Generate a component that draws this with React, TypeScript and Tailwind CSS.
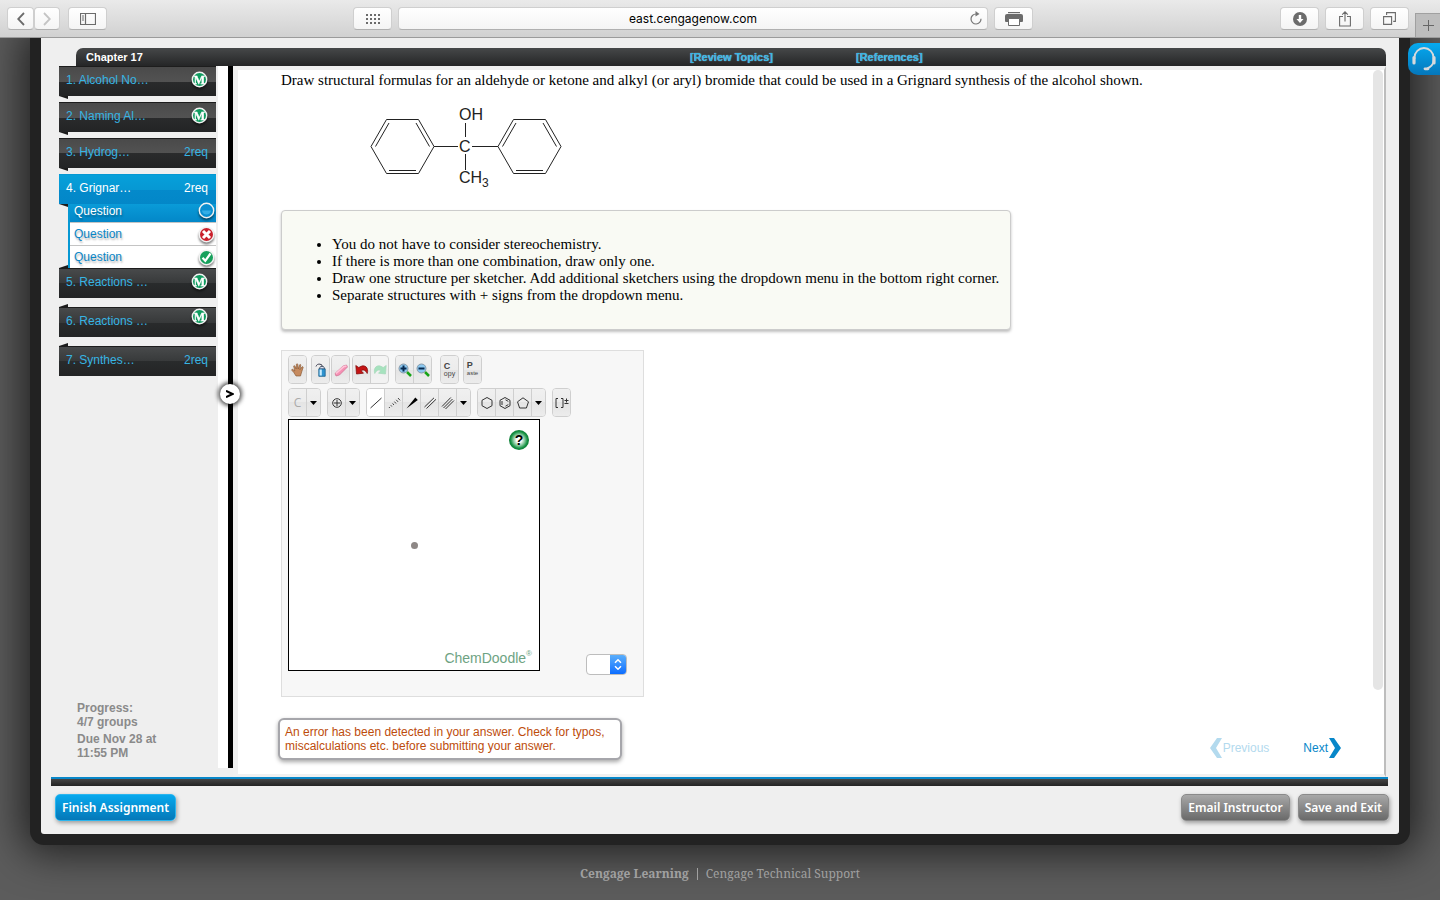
import React from 'react';
import { ChevronLeft, ChevronRight } from 'lucide-react';

type Status = 'mastered' | 'open' | 'wrong' | 'right';

const chromeButton =
    'flex h-[23px] items-center justify-center rounded-[4px] border border-[#cfcfcf] border-b-[#b0b0b0] bg-gradient-to-b from-white to-[#f4f4f4] text-[#6b6b6b]';

const BrowserBar: React.FC = () => {
    return (
        <header className="grid h-[38px] shrink-0 grid-cols-[353fr_680fr_407fr] items-center border-b border-[#9b9b9b] bg-gradient-to-b from-[#eaeaea] to-[#d1d1d1]">
            <div className="flex pl-[7px]">
                <button aria-label="Back" className={`${chromeButton} w-[27px]`}>
                    <svg width="8" height="14" viewBox="0 0 8 14" fill="none" stroke="currentColor" strokeWidth="1.800">
                        <path d="M7 1 1.200 7 7 13" />
                    </svg>
                </button>
                <button aria-label="Forward" className={`${chromeButton} w-[26px]`}>
                    <svg width="8" height="14" viewBox="0 0 8 14" fill="none" stroke="#c4c4c4" strokeWidth="1.800">
                        <path d="m1 1 5.800 6L1 13" />
                    </svg>
                </button>
                <button aria-label="Show sidebar" className={`${chromeButton} ml-2 w-[39px]`}>
                    <svg width="16" height="12" viewBox="0 0 16 12" fill="none" stroke="currentColor">
                        <path d="M.5.5h15v11H.5zM5.5.5v11" strokeWidth="1.2" />
                        <path d="M2 3h2M2 5h2M2 7h2" />
                    </svg>
                </button>
            </div>
            <div className="flex gap-[6px]">
                <button aria-label="Top sites" className={`${chromeButton} w-[39px] shrink-0`}>
                    <svg width="14" height="10" viewBox="0 0 14 10" fill="currentColor">
                        {[0, 4, 8].map((y) =>
                            [0, 4, 8, 12].map((x) => <rect key={`${x}-${y}`} x={x} y={y} width="2" height="2" />)
                        )}
                    </svg>
                </button>
                <div className={`${chromeButton} relative flex-1`}>
                    <input
                        aria-label="Address"
                        defaultValue="east.cengagenow.com"
                        className="w-full bg-transparent text-center font-['Inter',sans-serif] text-[12px] text-black outline-none"
                    />
                    <button aria-label="Reload" className="absolute right-[5px] top-[3px]">
                        <svg width="13" height="14" viewBox="0 0 13 14" fill="none" stroke="#777" strokeWidth="1.2">
                            <path d="M7 3a5 5 0 1 0 5 4.8" />
                            <path d="M6.5 0v5.6L10.5 3z" fill="#777" stroke="none" />
                        </svg>
                    </button>
                </div>
                <button aria-label="Print" className={`${chromeButton} w-[39px] shrink-0`}>
                    <svg width="18" height="14" viewBox="0 0 18 14">
                        <path d="M3 .6h12" stroke="currentColor" strokeWidth="1.2" />
                        <path d="M2 2h14a2 2 0 0 1 2 2v5a1 1 0 0 1-1 1H1a1 1 0 0 1-1-1V4a2 2 0 0 1 2-2z" fill="currentColor" />
                        <path d="M3.5 6.5h11v7h-11z" fill="#fff" stroke="currentColor" />
                    </svg>
                </button>
            </div>
            <div className="flex items-center justify-end gap-[6px] self-stretch">
                <button aria-label="Downloads" className={`${chromeButton} w-[39px]`}>
                    <svg width="14" height="14" viewBox="0 0 14 14">
                        <circle cx="7" cy="7" r="7" fill="currentColor" />
                        <path d="M5.8 3h2.4v4h2.3L7 11 3.500 7h2.300z" fill="#fff" />
                    </svg>
                </button>
                <button aria-label="Share" className={`${chromeButton} w-[39px]`}>
                    <svg width="12" height="16" viewBox="0 0 12 16" fill="none" stroke="currentColor" strokeWidth="1.1">
                        <path d="M4 5.500H.6v9.500h10.800V5.500H8M6 10.500V1M3.200 3.600 6 .8l2.800 2.800" />
                    </svg>
                </button>
                <button aria-label="Show all tabs" className={`${chromeButton} w-[39px]`}>
                    <svg width="13" height="13" viewBox="0 0 13 13" fill="none" stroke="currentColor" strokeWidth="1.1">
                        <path d="M.6 4.600h8v7.800h-8zM3.600 3V.6h8.800v8.800H10.200" />
                    </svg>
                </button>
                <button aria-label="New tab" className="flex h-[24px] w-[25px] items-center justify-center self-end border-l border-t border-[#a0a0a0] bg-[#bdbdbd]">
                    <svg width="11" height="11" viewBox="0 0 11 11" stroke="#666" strokeWidth="1">
                        <path d="M5.500 0v11M0 5.500h11" />
                    </svg>
                </button>
            </div>
        </header>
    );
};

const StatusBadge: React.FC<{ status: Status }> = ({ status }) => {
    const fill = { mastered: '#0f9b5f', open: '#0a8fd0', wrong: '#c9202c', right: '#17a05c' }[status];
    return (
        <svg width="17" height="17" viewBox="0 0 17 17" className="drop-shadow-[0_2px_1px_rgba(0,0,0,0.5)]">
            <circle cx="8.500" cy="8.500" r="7.200" fill={fill} stroke="#f2f2f2" strokeWidth="1.400" />
            {status === 'mastered' && (
                <text x="8.500" y="12.500" textAnchor="middle" fontSize="12" fontWeight="bold" fontFamily="Liberation Serif, serif" fill="#fff" stroke="#fff" strokeWidth=".3">
                    M
                </text>
            )}
            {status === 'open' && <path d="M4 8.500h9a4.500 4 0 0 1-9 0z" fill="#35aee6" />}
            {status === 'wrong' && <path d="m5 5 7 7M12 5l-7 7" stroke="#fff" strokeWidth="3" />}
            {status === 'right' && <path d="m4.500 8.800 2.800 3 5.200-7.300" fill="none" stroke="#fff" strokeWidth="2.200" />}
        </svg>
    );
};

const chapters = [
    { title: '1. Alcohol No…', mastered: true },
    { title: '2. Naming Al…', mastered: true },
    { title: '3. Hydrog…', mastered: false },
    { title: '4. Grignar…', mastered: false },
    { title: '5. Reactions …', mastered: true },
    { title: '6. Reactions …', mastered: true },
    { title: '7. Synthes…', mastered: false },
];

const questions: Status[] = ['open', 'wrong', 'right'];
const ACTIVE = 3;

const Sidebar: React.FC = () => {
    return (
        <aside className="flex w-[159px] shrink-0 flex-col justify-between pr-[2px] text-[12px]">
            <ul>
                {chapters.map((c, i) => (
                    <li key={c.title} className={i < ACTIVE ? 'mb-[6px]' : i > ACTIVE + 1 ? 'mt-[9px]' : ''}>
                        <div className="relative">
                            <button
                                className={`flex h-[30px] w-full items-center justify-between border-t pb-[4px] pl-[7px] pr-[8px] leading-[14px] ${
                                    i === ACTIVE
                                        ? 'border-[#0698d3] bg-[linear-gradient(#06a0da,#0698d3_50%,#048acb_50%,#0387c8)] text-white'
                                        : i < ACTIVE
                                          ? 'border-[#1d1d1d] bg-[linear-gradient(#4a4a4a,#525252_50%,#2a2b2c_50%,#232425)] text-[#37b5e4]'
                                          : 'border-[#1d1d1d] bg-[linear-gradient(#484a4b,#37393a_50%,#292b2c_50%,#232425)] text-[#37b5e4]'
                                }`}
                            >
                                <span>{c.title}</span>
                                {c.mastered ? (
                                    <span className={i === 5 ? 'self-start' : ''}>
                                        <StatusBadge status="mastered" />
                                    </span>
                                ) : (
                                    <span>2req</span>
                                )}
                            </button>
                            {i <= ACTIVE ? (
                                <span className="absolute left-0 top-full h-[3px] w-[9px] bg-[#1c1c1c] [clip-path:polygon(0_0,100%_0,100%_100%)]" />
                            ) : (
                                <span className="absolute bottom-full left-0 h-[3px] w-[9px] bg-[#1c1c1c] [clip-path:polygon(0_100%,100%_0,100%_100%)]" />
                            )}
                        </div>
                        {i === ACTIVE && (
                            <ul className="ml-[9px] border-l-2 border-[#0698d3] bg-white">
                                {questions.map((q) => (
                                    <li key={q} className="border-b border-[#c4c4c4] last:border-b-0">
                                        <button
                                            className={`flex w-full items-center justify-between pl-1 pr-px [text-shadow:1px_2px_2px_rgba(0,0,0,0.3)] ${
                                                q === 'open'
                                                    ? 'h-[18px] bg-gradient-to-b from-[#0a9bd8] to-[#0387c8] pb-[5px] text-white'
                                                    : 'h-[22px] text-[#0a86c6]'
                                            }`}
                                        >
                                            <span>Question</span>
                                            <StatusBadge status={q} />
                                        </button>
                                    </li>
                                ))}
                            </ul>
                        )}
                    </li>
                ))}
            </ul>
            <div className="mb-[17px] ml-[18px] w-[110px] space-y-[3px] font-bold leading-[14px] text-[#8a8a8a]">
                <p>
                    Progress:
                    <br />
                    4/7 groups
                </p>
                <p>
                    Due Nov 28 at
                    <br />
                    11:55 PM
                </p>
            </div>
        </aside>
    );
};

const Molecule: React.FC = () => {
    return (
        <svg width="193" height="85" viewBox="370 105 193 85" className="ml-[89px] mt-4 block" role="img" aria-label="1,1-diphenylethanol">
            <g fill="none" stroke="#222" strokeWidth="1">
                <path d="M371 146.500 386.500 119.500h32L434 146.500 418.500 173.500h-32z" />
                <path d="M375.500 146.500 389 123M416 123 429.500 146.500M389 170.500h27" />
                <path d="M498 146.500 513.500 119.500h32L561 146.500 545.500 173.500h-32z" />
                <path d="M502.500 146.500 516 123M543 123 556.500 146.500M516 170.500h27" />
                <path d="M434 146.500h24M472 146.500h26M465.500 123v14M465.500 154v16" />
            </g>
            <g fontFamily="Liberation Sans, sans-serif" fontSize="16" fill="#222">
                <text x="459" y="120">OH</text>
                <text x="459" y="152">C</text>
                <text x="459" y="183">CH</text>
                <text x="482" y="187" fontSize="12">3</text>
            </g>
        </svg>
    );
};

const ToolGroup: React.FC<{ className?: string; children: React.ReactNode }> = ({ className = '', children }) => (
    <div className={`flex h-[29px] divide-x divide-[#cfcfcf] overflow-hidden rounded-[4px] border border-[#cfcfcf] ${className}`}>{children}</div>
);

const Tool: React.FC<{ label: string; arrow?: boolean; selected?: boolean; faded?: boolean; children?: React.ReactNode }> = ({
    label,
    arrow,
    selected,
    faded,
    children,
}) => (
    <button
        aria-label={label}
        disabled={faded}
        className={`box-content flex items-center justify-center ${arrow ? 'w-[13px]' : 'w-[17px]'} ${
            selected ? 'bg-white' : 'bg-[linear-gradient(#f0f0f0,#ececec_50%,#e4e4e4_50%,#ececec)]'
        } ${faded ? 'opacity-40' : ''}`}
    >
        {arrow ? (
            <svg width="7" height="4" viewBox="0 0 7 4">
                <path d="M0 0h7L3.500 4z" fill="#000" />
            </svg>
        ) : (
            children
        )}
    </button>
);

const Glyph: React.FC<{ children: React.ReactNode }> = ({ children }) => (
    <svg width="14" height="14" viewBox="0 0 14 14" className="shrink-0" fill="none" stroke="#333" strokeWidth="1">
        {children}
    </svg>
);

const Magnifier: React.FC<{ plus?: boolean }> = ({ plus }) => (
    <Glyph>
        <path d="m9 9 4 4" stroke="#17a317" strokeWidth="2.500" />
        <circle cx="5.500" cy="5.500" r="4.500" fill="#8cc8f0" stroke="#8a9aa8" />
        <path d={plus ? 'M2.500 5.500h6M5.500 2.500v6' : 'M2.500 5.500h6'} stroke="#06294f" strokeWidth="2" />
    </Glyph>
);

const Sketcher: React.FC = () => {
    return (
        <section className="mt-5 w-[363px] border border-[#dedede] bg-[#f7f7f7] px-[6px] pb-[25px] pt-1">
            <div className="flex">
                <ToolGroup>
                    <Tool label="Move">
                        <Glyph>
                            <path
                                d="M5 13 2.800 9.500.8 7.200c-.4-.8.600-1.200 1.200-.6L3.800 8 2.700 3.500c-.2-1 1-1.200 1.300-.3L5.200 6 5.400 1.500c.1-1 1.300-1 1.400 0L7.200 6l1.300-4c.3-.9 1.500-.6 1.300.4L9 6.700l1.900-2.700c.6-.8 1.600-.1 1.200.7L10.800 8.500 9.500 13z"
                                fill="#c68a5e"
                                stroke="#80502e"
                                strokeWidth=".6"
                            />
                        </Glyph>
                    </Tool>
                </ToolGroup>
                <ToolGroup className="ml-1">
                    <Tool label="Clear">
                        <Glyph>
                            <path d="M2 3.500C2.500 1.500 4.500 .8 6 1.200L8 2v1.500" stroke="#445" />
                            <path d="M6.500 3.500h3l1.500 2.500H5z" fill="#dde" stroke="#345" strokeWidth=".8" />
                            <path d="M4.800 6h6.400v7.300H4.800z" fill="#2f93cf" stroke="#1b5f8d" strokeWidth=".8" />
                            <path d="M5.600 6.600h2.200v6H5.600z" fill="#c9ecff" stroke="none" />
                        </Glyph>
                    </Tool>
                </ToolGroup>
                <ToolGroup className="ml-px">
                    <Tool label="Erase">
                        <Glyph>
                            <path d="M1 10.500 9 3l3.500-1 1 2-8 8L2 13z" fill="#f590b4" stroke="#c96488" strokeWidth=".6" />
                            <path d="M2 10.500 9.500 3.800l3-.8" stroke="#ffc4d8" strokeWidth="1.600" />
                        </Glyph>
                    </Tool>
                </ToolGroup>
                <ToolGroup className="ml-[2px]">
                    <Tool label="Undo">
                        <Glyph>
                            <path d="m.8 2.500.7 8.500 7-.8-2.300-2.400c2-1.800 4.500-.3 6 2.700C14 5 10 .2 3.800 4.500z" fill="#c41414" stroke="#7c0909" strokeWidth=".7" />
                        </Glyph>
                    </Tool>
                    <Tool label="Redo" faded>
                        <Glyph>
                            <path d="m13.200 2.500-.7 8.500-7-.8 2.300-2.400c-2-1.800-4.500-.3-6 2.700C0 5 4 .2 10.200 4.500z" fill="#2fc46a" stroke="#2da85e" strokeWidth=".7" />
                        </Glyph>
                    </Tool>
                </ToolGroup>
                <ToolGroup className="ml-[6px]">
                    <Tool label="Zoom in">
                        <Magnifier plus />
                    </Tool>
                    <Tool label="Zoom out">
                        <Magnifier />
                    </Tool>
                </ToolGroup>
                <ToolGroup className="ml-2">
                    <Tool label="Copy">
                        <span className="text-left text-[9px] leading-[7px] text-[#444]">
                            <b>C</b>
                            <br />
                            <span className="text-[7px]">opy</span>
                        </span>
                    </Tool>
                </ToolGroup>
                <ToolGroup className="ml-1">
                    <Tool label="Paste">
                        <span className="text-left text-[9px] leading-[7px] text-[#444]">
                            <b>P</b>
                            <br />
                            <span className="text-[6px]">aste</span>
                        </span>
                    </Tool>
                </ToolGroup>
            </div>
            <div className="mt-1 flex gap-[6px]">
                <ToolGroup>
                    <Tool label="Carbon">
                        <span className="font-['Open_Sans',sans-serif] text-[12px] text-[#aaa]">C</span>
                    </Tool>
                    <Tool label="More elements" arrow />
                </ToolGroup>
                <ToolGroup>
                    <Tool label="Increase charge">
                        <Glyph>
                            <circle cx="7" cy="7" r="4.300" />
                            <path d="M4 7h6M7 4v6" />
                        </Glyph>
                    </Tool>
                    <Tool label="More charges" arrow />
                </ToolGroup>
                <ToolGroup>
                    <Tool label="Single bond" selected>
                        <Glyph>
                            <path d="M1.500 12 12.500 2" />
                        </Glyph>
                    </Tool>
                    <Tool label="Recessed bond">
                        <Glyph>
                            <path d="m2 11 .8 1M3.800 9.200l1 1.300M5.600 7.400l1.300 1.600M7.400 5.600l1.600 1.900M9.200 3.800l1.900 2.100M11 2l2 2.300" strokeWidth=".9" />
                        </Glyph>
                    </Tool>
                    <Tool label="Protruding bond">
                        <Glyph>
                            <path d="M1.500 12.500 10.300 1.500l2.500 2.500z" fill="#000" stroke="none" />
                        </Glyph>
                    </Tool>
                    <Tool label="Double bond">
                        <Glyph>
                            <path d="M1.500 11 11 1.800M3.500 12.500 13 3.300" />
                        </Glyph>
                    </Tool>
                    <Tool label="Triple bond">
                        <Glyph>
                            <path d="M1 10.500 9.800 1.500M2.500 12 11.500 3M4.500 13 13 4.500" />
                        </Glyph>
                    </Tool>
                    <Tool label="More bonds" arrow />
                </ToolGroup>
                <ToolGroup>
                    <Tool label="Cyclohexane ring">
                        <Glyph>
                            <path d="M7 1.500 12 4.300v5.400L7 12.500 2 9.700V4.300z" />
                        </Glyph>
                    </Tool>
                    <Tool label="Benzene ring">
                        <Glyph>
                            <path d="M7 1.500 12 4.300v5.400L7 12.500 2 9.700V4.300zM4 5v4M7.500 3.800l2.800 1.600M7.500 10.200l2.800-1.600" />
                        </Glyph>
                    </Tool>
                    <Tool label="Cyclopentane ring">
                        <Glyph>
                            <path d="m7 1.800 5.500 4-2.100 6.200H3.600L1.500 5.800z" />
                        </Glyph>
                    </Tool>
                    <Tool label="More rings" arrow />
                </ToolGroup>
                <ToolGroup>
                    <Tool label="Brackets">
                        <Glyph>
                            <path d="M3 2.500H1v9h2M6 2.500h2v9H6M9.500 4.500h4M11.500 2.500v4M9.500 7.500h4" />
                        </Glyph>
                    </Tool>
                </ToolGroup>
            </div>
            <div className="mt-[2px] flex items-end">
                <div className="flex h-[252px] w-[252px] flex-col justify-between border border-black bg-white">
                    <button
                        aria-label="Help"
                        className="mr-[10px] mt-[10px] h-5 w-5 self-end rounded-full bg-[radial-gradient(circle_closest-side,#ffffff_25%,#8ccba2_55%,#1a9447_82%,#067a30)] text-[14px] font-bold leading-5 text-black"
                    >
                        ?
                    </button>
                    <span className="h-[7px] w-[7px] self-center rounded-full bg-[#8e8886]" />
                    <p className="mr-[7px] flex h-[30px] self-end pt-[10px] text-[14px] leading-[16px] text-[#6ea383]">
                        ChemDoodle<span className="text-[8px] leading-[8px]">®</span>
                    </p>
                </div>
                <label className="relative -mb-1 ml-[46px] flex h-[21px] w-[41px] overflow-hidden rounded-[4px] border border-[#bdbdbd] bg-white">
                    <select aria-label="Add sketcher or operator" className="w-full appearance-none" />
                    <span className="pointer-events-none absolute inset-y-0 right-0 flex w-[16px] items-center justify-center bg-gradient-to-b from-[#5aaefb] to-[#0a6cff]">
                        <svg width="8" height="11" viewBox="0 0 8 11" fill="none" stroke="#fff" strokeWidth="1.500">
                            <path d="m1 3.800 3-3 3 3M1 7.200l3 3 3-3" />
                        </svg>
                    </span>
                </label>
            </div>
        </section>
    );
};

const Question: React.FC = () => {
    return (
        <main className="flex min-w-0 flex-1 border-b-[3px] border-l-[5px] border-r-2 border-t-4 border-[#f0f0f0] border-r-[#bdbdbd]">
            <div className="flex flex-1 flex-col bg-white pl-[43px] pt-[2px]">
                <p className="font-['Liberation_Serif',serif] text-[15px] leading-[17px] text-black">
                    Draw structural formulas for an aldehyde or ketone and alkyl (or aryl) bromide that could be used in a Grignard synthesis of the alcohol shown.
                </p>
                <Molecule />
                <ul className="mt-5 w-[730px] list-disc rounded-[4px] border border-[#ccc] bg-[#f9faf4] py-[25px] pl-[50px] font-['Liberation_Serif',serif] text-[15px] leading-[17px] text-black shadow-[0_2px_3px_rgba(0,0,0,0.25)]">
                    <li>You do not have to consider stereochemistry.</li>
                    <li>If there is more than one combination, draw only one.</li>
                    <li>Draw one structure per sketcher. Add additional sketchers using the dropdown menu in the bottom right corner.</li>
                    <li>Separate structures with + signs from the dropdown menu.</li>
                </ul>
                <Sketcher />
                <div className="-ml-[3px] mt-[21px] flex items-end justify-between pr-[32px]">
                    <p className="w-[344px] rounded-[6px] border-2 border-[#a6a6ab] bg-white px-[5px] py-[5px] text-[12px] leading-[14px] text-[#bd4c0b] shadow-[0_2px_4px_rgba(0,0,0,0.35)]">
                        An error has been detected in your answer. Check for typos, miscalculations etc. before submitting your answer.
                    </p>
                    <nav className="flex gap-[34px] pb-[2px] text-[12px] leading-5">
                        <a href="#previous" className="flex items-center text-[#b3daee]">
                            <svg width="13" height="20" viewBox="0 0 13 20">
                                <path d="M7 0h5L6 10l6 10H7L0 10z" fill="currentColor" />
                            </svg>
                            Previous
                        </a>
                        <a href="#next" className="flex items-center text-[#0887c9]">
                            Next
                            <svg width="13" height="20" viewBox="0 0 13 20">
                                <path d="M6 0H1l6 10L1 20h5l7-10z" fill="currentColor" />
                            </svg>
                        </a>
                    </nav>
                </div>
            </div>
            <div className="w-[11px] bg-white pr-px">
                <div className="h-[88%] rounded-full bg-[#e5e5e5]" />
            </div>
        </main>
    );
};

const footerButton =
    "h-[27px] rounded-[5px] border px-[6px] text-white shadow-[1px_2px_4px_rgba(0,0,0,0.35)] font-['Noto_Sans','Open_Sans',sans-serif] text-[12px] font-semibold";

const App: React.FC = () => {
    return (
        <div className="relative flex min-h-screen flex-col overflow-hidden bg-[#5c5c5c] font-['Liberation_Sans',sans-serif]">
            <div className="z-10">
                <BrowserBar />
            </div>
            <div className="mx-[30px] flex flex-1 flex-col rounded-b-[14px] border-x-[11px] border-b-[11px] border-[#222] bg-[#efefef] pt-[10px] shadow-[0_0_40px_8px_rgba(0,0,0,0.65)]">
                <div className="ml-[35px] mr-[13px] grid h-[18px] grid-cols-[614fr_166fr_530fr] items-center rounded-t-[7px] bg-gradient-to-b from-[#464849] to-[#252627] text-[11px] font-bold leading-[14px]">
                    <h1 className="pl-[10px] text-white">Chapter 17</h1>
                    <a href="#review" className="text-[#37b5e4] [text-shadow:0_0_1px_#9fd8ee]">
                        [Review Topics]
                    </a>
                    <a href="#references" className="text-[#37b5e4] [text-shadow:0_0_1px_#9fd8ee]">
                        [References]
                    </a>
                </div>
                <div className="ml-[18px] mr-[13px] flex flex-1">
                    <Sidebar />
                    <div className="relative mb-[9px] w-[15px] border-l-[10px] border-white bg-black">
                        <button
                            aria-label="Collapse navigation"
                            className="absolute -left-[8px] top-[318px] flex h-5 w-5 items-center justify-center rounded-full bg-white shadow-[0_0_4px_2px_rgba(0,0,0,0.65)]"
                        >
                            <svg width="8" height="8" viewBox="0 0 8 8" fill="none" stroke="#000" strokeWidth="2">
                                <path d="M0 .8 6.500 4 0 7.200" />
                            </svg>
                        </button>
                    </div>
                    <Question />
                </div>
                <div className="ml-[10px] mr-[11px] h-[9px] border-t-2 border-[#0887c9] bg-gradient-to-b from-[#454545] to-[#242424]" />
                <div className="flex h-[48px] items-center justify-between pb-[5px] pl-[14px] pr-[10px]">
                    <button className={`${footerButton} border-[#2cb5ee] bg-gradient-to-b from-[#08a9ee] to-[#0578b8]`}>Finish Assignment</button>
                    <div className="flex gap-2">
                        <button className={`${footerButton} border-[#8a8a8a] bg-gradient-to-b from-[#a8a8a8] to-[#6a6a6a]`}>Email Instructor</button>
                        <button className={`${footerButton} border-[#8a8a8a] bg-gradient-to-b from-[#a8a8a8] to-[#6a6a6a]`}>Save and Exit</button>
                    </div>
                </div>
            </div>
            <footer className="z-10 flex h-[55px] items-center justify-center gap-2 pt-[3px] font-['Noto_Serif','DejaVu_Serif_Condensed','DejaVu_Serif',serif] text-[12px] text-[#a0a0a0]">
                <a href="#cengage" className="font-bold">
                    Cengage Learning
                </a>
                <span className="h-3 w-px bg-[#a0a0a0]" />
                <a href="#support">Cengage Technical Support</a>
            </footer>
            <button
                aria-label="Live support"
                className="absolute right-0 top-[43px] flex h-8 w-8 items-center justify-center rounded-l-[10px] bg-gradient-to-b from-[#06aaf0] to-[#0577bb]"
            >
                <svg width="24" height="26" viewBox="0 0 24 26" fill="none" stroke="#d6d9dc" strokeWidth="1.800">
                    <path d="M2.500 13V11.500a9.500 9.500 0 0 1 19 0V14c0 4-2.500 7-6.500 8.500" />
                    <path d="M2 11.500v5.500M22 11.500v5.500" strokeWidth="3.200" strokeLinecap="round" />
                    <path d="M13 22.800h3" strokeWidth="2.800" strokeLinecap="round" />
                </svg>
            </button>
        </div>
    );
};

export default App;
